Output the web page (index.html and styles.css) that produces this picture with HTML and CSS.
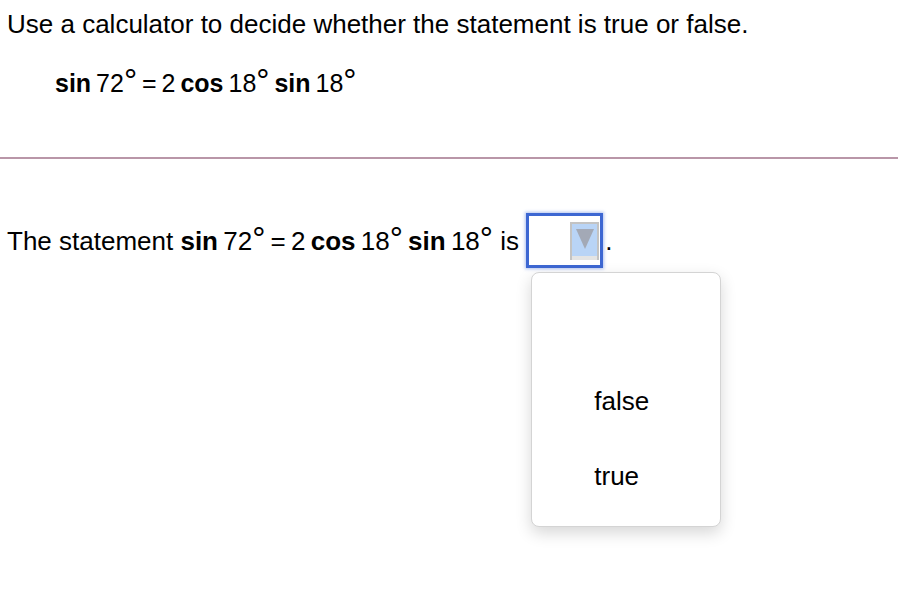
FILE: index.html
```html
<!DOCTYPE html>
<html>
<head>
<meta charset="utf-8">
<link rel="stylesheet" href="styles.css">
</head>
<body>
<div class="page">
  <section class="question">
    <p class="prompt">Use a calculator to decide whether the statement is true or false.</p>
    <p class="equation"><span class="math"><b>sin</b> 72<sup>°</sup> = 2 <b>cos</b> 18<sup>°</sup> <b>sin</b> 18<sup>°</sup></span></p>
  </section>
  <hr class="divider">
  <section class="answer">
    <p class="statement">The statement <span class="math"><b>sin</b> 72<sup>°</sup> = 2 <b>cos</b> 18<sup>°</sup> <b>sin</b> 18<sup>°</sup></span> is <span class="select-wrap"><span class="select"><span class="select-btn"><span class="tri"></span></span></span><span class="menu"><span class="opt">false</span><span class="opt">true</span></span></span>.</p>
  </section>
</div>
</body>
</html>
```
FILE: styles.css
```css
html, body {
  margin: 0;
  padding: 0;
  background: #fff;
}
body {
  font-family: "Liberation Sans", Arial, sans-serif;
  color: #000;
}
.page {
  width: 898px;
  height: 596px;
  overflow: hidden;
}
.question {
  padding: 9px 0 0 7px;
}
.prompt {
  margin: 0;
  font-size: 26px;
  line-height: 30px;
}
.equation {
  margin: 29px 0 0 48px;
  font-size: 25px;
  line-height: 30px;
}
.math {
  word-spacing: -2px;
}
sup {
  font-size: 33px;
  vertical-align: 0;
  position: relative;
  top: 0;
  line-height: 0;
}
.divider {
  margin: 59px 0 0 0;
  border: 0;
  height: 2px;
  background: #b996a8;
}
.answer {
  padding: 54px 0 0 7px;
}
.statement {
  margin: 0;
  font-size: 26px;
  line-height: 30px;
}
.select-wrap {
  position: relative;
  display: inline-block;
  vertical-align: middle;
  margin: 0 2px 6px 0;
}
.select {
  display: flex;
  justify-content: flex-end;
  align-items: flex-start;
  border: 3px solid #3d67d2;
  box-shadow: 0 0 3px 1px rgba(80, 120, 220, 0.45);
  background: #fff;
  padding: 6px 1px 0 0;
  box-sizing: border-box;
  width: 77px;
  height: 55px;
}
.select-btn {
  width: 29px;
  height: 38px;
  background: #b9d4f6;
  border: 2px solid #c3c3c3;
  border-bottom: 0;
  position: relative;
  display: flex;
  justify-content: center;
  padding-top: 5px;
  box-sizing: border-box;
}
.select-btn::after {
  content: "";
  position: absolute;
  left: 0;
  right: 0;
  bottom: 0;
  height: 4px;
  background: #e4e4e4;
}
.tri {
  width: 0;
  height: 0;
  border-left: 9px solid transparent;
  border-right: 9px solid transparent;
  border-top: 20px solid #a3a9b6;
}
.menu {
  position: absolute;
  left: 5px;
  top: 59px;
  width: 190px;
  height: 255px;
  background: #fff;
  border: 1px solid #d4d4d4;
  border-radius: 8px;
  box-shadow: 0 6px 16px rgba(0, 0, 0, 0.16);
  display: flex;
  flex-direction: column;
  padding: 113px 0 0 62px;
  box-sizing: border-box;
  gap: 45px;
}
.opt {
  font-size: 26px;
  line-height: 30px;
}
```
